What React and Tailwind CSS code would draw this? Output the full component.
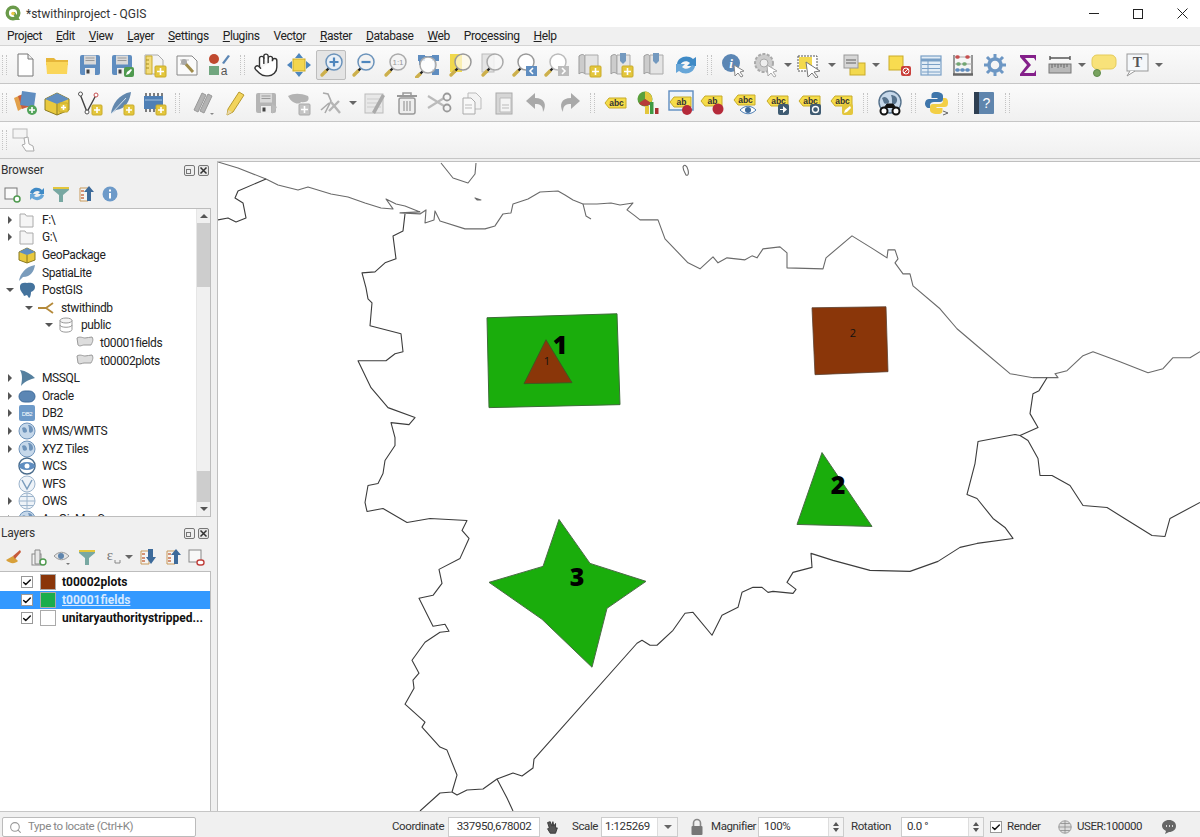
import { Hand, Check, Search } from "lucide-react";

const YB = ({ x = 15, y = 15, s = 10, c = "#e3c63c", e = "#c9ab2a" }) => (
  <g>
    <rect x={x} y={y} width={s} height={s} rx="1" fill={c} stroke={e} />
    <path d={`M${x + s / 2} ${y + 2}v${s - 4}M${x + 2} ${y + s / 2}h${s - 4}`} stroke="#fff" strokeWidth="1.6" />
  </g>
);

const Floppy = ({ c = "#5f8dc0" }) => (
  <g>
    <rect x="3" y="3" width="20" height="20" rx="2" fill={c} />
    <rect x="7" y="3.5" width="12" height="9" fill="#d9d9d9" />
    <path d="M8.5 6h9M8.5 8.5h9" stroke="#999" />
    <rect x="8" y="16" width="10" height="7" fill="#eee" />
    <rect x="9.5" y="17.5" width="3" height="4" fill="#444" />
  </g>
);

const Lens = ({ children, fill = "#fff", stroke = "#888", cx = 16, cy = 10 }) => (
  <g>
    <line x1={cx - 12} y1={cy + 13} x2={cx - 8} y2={cy + 9} stroke="#cdb04c" strokeWidth="3.4" strokeLinecap="round" />
    <line x1={cx - 7.5} y1={cy + 8.5} x2={cx - 5} y2={cy + 6} stroke="#222" strokeWidth="2.4" />
    <circle cx={cx} cy={cy} r="8" fill={fill} stroke={stroke} strokeWidth="1.5" />
    {children}
  </g>
);

const MapSheet = () => (
  <g>
    <path d="M3 4c3-2 4-2 6 0v18c-2-2-4-2-6 0z" fill="#ccc" stroke="#999" />
    <path d="M9 3h13v19H9z" fill="#e4e4e4" stroke="#aaa" />
  </g>
);

const Abc = ({ x = 0, y = 0, t = "abc" }) => (
  <g transform={`translate(${x} ${y})`}>
    <path d="M5 5h17v10H5l-4-5z" fill="#f5dc48" stroke="#c7ab2a" />
    <text x="12.5" y="13" fontSize="8.5" fontWeight="700" textAnchor="middle" fill="#333" fontFamily="Liberation Sans, sans-serif">{t}</text>
  </g>
);

const Globe = ({ c = "#6f94bb", x = 13, y = 13, r = 10 }) => (
  <g>
    <circle cx={x} cy={y} r={r} fill="#c6d8ea" stroke={c} strokeWidth="1.4" />
    <path d={`M${x - r + 3} ${y - 4}c4-3 6 1 7 3s-3 4-5 2M${x + 1} ${y - 7}c3 0 7 2 6 6s-5 5-5 1 0-4-1-7`} fill={c} />
  </g>
);

const ICONS = {
  new: <g><path d="M6 2h10l5 5v17H6z" fill="#fff" stroke="#777" /><path d="M16 2v5h5" fill="#eee" stroke="#777" /></g>,
  open: <g><path d="M2 6h8l2 2h12v5H2z" fill="#e6b63a" /><path d="M2 10h22l-1 12H3z" fill="#fad65a" /></g>,
  save: <Floppy />,
  saveAs: <g><Floppy /><rect x="15" y="15" width="10" height="10" rx="2" fill="#4f9a4f" /><path d="M17 23l1-3 4-3 1 1-3 4z" fill="#fff" /></g>,
  newLayout: <g><path d="M4 3h13l5 5v14H4z" fill="#f3f3f3" stroke="#aaa" /><path d="M5 4h6v18H5z" fill="#f3dc7c" stroke="#c9ab2a" /><path d="M5 8h3M5 12h3M5 16h3" stroke="#a98e20" /><YB x={14} y={14} s={11} /></g>,
  layoutMgr: <g><path d="M3 4h15l5 5v14H3z" fill="#fafafa" stroke="#888" /><path d="M6 8h9M6 12h6" stroke="#bbb" /><path d="M10 10l9 10" stroke="#a08c4a" strokeWidth="3" /><circle cx="10" cy="10" r="3" fill="#aaa" /></g>,
  style: <g><circle cx="8" cy="7" r="5" fill="#c0492f" /><rect x="3" y="14" width="10" height="9" fill="#71a67f" /><path d="M16 11l6-8 2 1-6 8z" fill="#5b86b4" /><text x="18" y="23" fontSize="12" fill="#555" textAnchor="middle" fontFamily="Liberation Sans, sans-serif">a</text></g>,
  panTo: <g><rect x="7" y="7" width="12" height="12" fill="#f4d64e" stroke="#c9ab2a" /><path d="M13 1l4 5H9zM13 25l-4-5h8zM1 13l5-4v8zM25 13l-5 4V9z" fill="#4e86bd" /></g>,
  zoomIn: <Lens fill="#e8eff6" stroke="#6b93bb"><path d="M16 5.5v9M11.5 10h9" stroke="#4e86bd" strokeWidth="2.2" /></Lens>,
  zoomOut: <Lens fill="#f2f2f2" stroke="#6b93bb"><path d="M11.5 10h9" stroke="#4e86bd" strokeWidth="2.2" /></Lens>,
  zoom11: <Lens fill="#f4f4f4" stroke="#aaa"><text x="16" y="13" fontSize="8" textAnchor="middle" fill="#999" fontFamily="Liberation Sans, sans-serif">1:1</text></Lens>,
  zoomFull: <g><path d="M3 3h7v6H3zM17 3h7v6h-7zM17 17h7v6h-7z" fill="#5f8dc0" /><path d="M10 5h7M20 9v8M5 9v4" stroke="#5f8dc0" strokeWidth="2" /><Lens fill="#ffffffcc" stroke="#aaa" cx={13} cy={13} /></g>,
  zoomLayer: <g><rect x="3" y="2" width="12" height="18" fill="#f0d84c" /><Lens fill="#fffbe6aa" stroke="#999" /></g>,
  zoomSel: <g><rect x="3" y="2" width="12" height="18" fill="#e4e4e4" stroke="#bbb" /><Lens fill="#f7f7f7cc" stroke="#aaa" /></g>,
  zoomLast: <g><Lens fill="#fff" stroke="#999" cx={14} /><rect x="14" y="14" width="11" height="10" fill="#5f8dc0" /><path d="M21 16l-3 3 3 3" stroke="#fff" strokeWidth="1.6" fill="none" /></g>,
  zoomNext: <g><Lens fill="#fff" stroke="#bbb" cx={14} /><rect x="14" y="14" width="11" height="10" fill="#bcbcbc" /><path d="M18 16l3 3-3 3" stroke="#fff" strokeWidth="1.6" fill="none" /></g>,
  bookmarkNew: <g><MapSheet /><YB x={14} y={14} s={11} /></g>,
  bookmarkNew2: <g><MapSheet /><path d="M12 1h6v8l-3 3-3-3z" fill="#7399bf" /><YB x={14} y={14} s={11} /></g>,
  bookmarks: <g><MapSheet /><path d="M12 1h6v8l-3 3-3-3z" fill="#7399bf" /></g>,
  refresh: <g><path d="M4 12c1-7 10-10 16-5l3-2v9h-9l3-3c-3-3-8-2-10 2z" fill="#3f8ac6" /><path d="M22 14c-1 7-10 10-16 5l-3 2v-9h9l-3 3c3 3 8 2 10-2z" fill="#67a6d8" /></g>,
  identify: <g><circle cx="11" cy="11" r="9" fill="#5b86b4" /><text x="11" y="16" fontSize="13" fontStyle="italic" fontWeight="700" fill="#fff" textAnchor="middle" fontFamily="Liberation Serif, serif">i</text><path d="M14 13l10 6-4 1 3 4-2 1-3-4-3 3z" fill="#fff" stroke="#888" /></g>,
  runFeature: <g><circle cx="11" cy="11" r="9" fill="#ccc" stroke="#aaa" strokeDasharray="3 1.5" strokeWidth="2" /><circle cx="11" cy="11" r="4" fill="#eee" stroke="#aaa" /><path d="M14 13l10 6-4 1 3 4-2 1-3-4-3 3z" fill="#fff" stroke="#aaa" /></g>,
  select: <g><rect x="1" y="4" width="19" height="15" fill="#fff" stroke="#555" strokeDasharray="2 1" /><rect x="2" y="5" width="13" height="12" fill="#f3d94e" /><path d="M9 10l14 9-6 1 4 5-2 1-4-5-4 4z" fill="#fff" stroke="#777" /></g>,
  selectVal: <g><rect x="9" y="11" width="15" height="12" fill="#f3d94e" stroke="#c9ab2a" /><rect x="3" y="3" width="14" height="13" fill="#d7d7d7" stroke="#999" /><path d="M5 8h10M5 11h10" stroke="#888" strokeWidth="1.5" /></g>,
  deselect: <g><rect x="3" y="4" width="14" height="14" fill="#f8dc50" stroke="#c9ab2a" /><rect x="15" y="14" width="10" height="10" rx="2" fill="#c9403c" /><circle cx="20" cy="19" r="3" fill="none" stroke="#fff" /><path d="M18 21l4-4" stroke="#fff" /></g>,
  attrTable: <g><rect x="3" y="4" width="20" height="19" fill="#e3edf6" stroke="#7aa0c6" strokeWidth="1.2" /><path d="M3 8h20" stroke="#7aa0c6" strokeWidth="3" /><path d="M4 12.5h18M4 16.5h18M4 20h18M10 9v14" stroke="#7aa0c6" /></g>,
  stats: <g><path d="M4 3v19M22 3v19" stroke="#777" strokeWidth="1.5" /><path d="M3 22.5h20" stroke="#666" strokeWidth="2.5" /><path d="M4 5h18M4 12h18M4 18h18" stroke="#aaa" /><path d="M7 5h1M17 5h1" stroke="#c65050" strokeWidth="3.5" strokeLinecap="round" /><path d="M8 12h1M14 12h1" stroke="#72a672" strokeWidth="3.5" strokeLinecap="round" /><path d="M7 18h1M12 18h1M17 18h1" stroke="#5f8dc0" strokeWidth="3.5" strokeLinecap="round" /></g>,
  gear: <g><circle cx="13" cy="13" r="6" fill="none" stroke="#6d97c4" strokeWidth="3.5" /><path d="M13 2v5M13 19v5M2 13h5M19 13h5M5 5l4 4M17 17l4 4M21 5l-4 4M9 17l-4 4" stroke="#6d97c4" strokeWidth="3" /></g>,
  sigma: <path d="M5 3h16v6l-2-3H10l6 7-7 8h10l2-3v6H5v-2l7-9-7-8z" fill="#84208a" />,
  ruler: <g><path d="M3 6h20M3 4v4M23 4v4" stroke="#555" strokeWidth="1.4" /><rect x="2" y="12" width="22" height="9" fill="#b8b8b8" stroke="#777" /><path d="M5 12v4M8 12v3M11 12v4M14 12v3M17 12v4M20 12v3" stroke="#666" /></g>,
  annotation: <g><rect x="1" y="3" width="24" height="14" rx="5" fill="#f8e27a" stroke="#e4cb5a" /><path d="M6 16l-1 6 7-5z" fill="#f8e27a" /><circle cx="6" cy="21" r="3.5" fill="#78a35f" stroke="#5f8a4c" /></g>,
  textAnno: <g><rect x="3" y="2" width="21" height="17" fill="#f4f7fa" stroke="#999" /><path d="M6 19l-3 5 8-5" fill="#fff" stroke="#999" /><text x="13.5" y="15" fontSize="14" fontWeight="700" fill="#555" textAnchor="middle" fontFamily="Liberation Serif, serif">T</text></g>,

  dsm: <g><path d="M2 8l9-4 3 12-8 5z" fill="#e2a04a" /><path d="M6 6l10-3 3 13-9 3z" fill="#c95c3c" /><rect x="9" y="2" width="14" height="14" transform="rotate(8 16 9)" fill="#5f8dc0" /><circle cx="20" cy="20" r="5" fill="#52a35a" /><path d="M20 17v6M17 20h6" stroke="#fff" strokeWidth="1.6" /></g>,
  gpkg: <g><path d="M1 9l12-6 12 6v11l-12 5-12-5z" fill="#e9c93e" stroke="#8a7a20" /><path d="M1 9l12 5 12-5-12-6z" fill="#5f8dc0" /><path d="M13 14v11" stroke="#8a7a20" /><YB x={15} y={13} s={9} /></g>,
  vertex: <g><path d="M3 4l7 18 9-17" fill="none" stroke="#444" strokeWidth="1.4" /><circle cx="3.5" cy="4" r="2" fill="#fff" stroke="#555" /><circle cx="19" cy="5" r="2" fill="#fff" stroke="#c65050" /><circle cx="10" cy="22" r="2" fill="#fff" stroke="#555" /><YB x={15} y={15} s={10} /></g>,
  feather: <g><path d="M2 24c1-10 8-20 20-22-1 8-5 17-15 18z" fill="#6388ae" /><path d="M2 24L17 8" stroke="#d8e4ee" /><YB x={15} y={15} s={10} /></g>,
  chip: <g><rect x="3" y="6" width="19" height="13" fill="#4e7fb5" /><path d="M5 3v3M9 3v3M13 3v3M17 3v3M21 3v3M5 19v3M9 19v3M13 19v3" stroke="#555" strokeWidth="1.5" /><path d="M4 10h17" stroke="#9fc0df" /><YB x={15} y={15} s={10} /></g>,
  pencils: <g><path d="M5 20L13 3l4 2-8 17zM11 21L19 4l4 2-8 17z" fill="#b3b3b3" stroke="#999" /><path d="M21 23h4l-2 2z" fill="#888" /></g>,
  pencil: <g><path d="M7 19L18 2l5 3-11 17-6 3z" fill="#f2d45c" stroke="#b79a2f" /><path d="M6 25l1-5 4 2z" fill="#e9d7a8" /></g>,
  saveEdit: <g><Floppy c="#b5b5b5" /><path d="M19 14l5 3-5 7z" fill="#bbb" /></g>,
  addFeature: <g><path d="M2 6c6-3 12-3 20 0 2 4-1 7-7 6-2 3-9 2-13-6z" fill="#b3b3b3" /><YB x={13} y={14} s={11} c="#c4c4c4" e="#aaa" /></g>,
  moveFeature: <g><path d="M5 3l5 1 3 7-6 12M3 20l8-7" fill="none" stroke="#aaa" strokeWidth="1.6" /><path d="M11 21l10-10M13 12l9 11" stroke="#b5b5b5" strokeWidth="2.4" /></g>,
  toggle: <g><rect x="3" y="4" width="18" height="19" fill="#e8e8e8" stroke="#bbb" /><path d="M5 9h14M5 13h14M5 17h14" stroke="#ccc" /><path d="M10 22l10-18 3 2-10 18z" fill="#aaa" /></g>,
  trash: <g><path d="M3 6h20" stroke="#999" strokeWidth="2" /><path d="M9 6V3h8v3" fill="none" stroke="#999" strokeWidth="1.5" /><rect x="5" y="8" width="16" height="16" rx="2" fill="#eee" stroke="#999" strokeWidth="1.5" /><path d="M10 11v10M13 11v10M16 11v10" stroke="#aaa" strokeWidth="1.5" /></g>,
  cut: <g><path d="M1 6l16 10M1 18l16-10" stroke="#bbb" strokeWidth="2.2" /><circle cx="20" cy="7" r="3.5" fill="none" stroke="#999" strokeWidth="1.8" /><circle cx="20" cy="18" r="3.5" fill="none" stroke="#999" strokeWidth="1.8" /></g>,
  copy: <g><path d="M9 3h8l5 5v11H9z" fill="#f3f3f3" stroke="#bbb" /><path d="M4 8h8l4 4v12H4z" fill="#f8f8f8" stroke="#aaa" /><path d="M6 15h7M6 18h7" stroke="#bbb" /></g>,
  paste: <g><rect x="5" y="3" width="16" height="21" fill="#d6d6d6" stroke="#aaa" /><path d="M9 8h11v14H9z" fill="#f4f4f4" stroke="#bbb" /><path d="M11 15h7M11 18h7" stroke="#bbb" /></g>,
  undo: <path d="M11 3L2 11l9 8v-5c5 0 8 1 8 8 4-7 2-14-8-14z" fill="#a9a9a9" />,
  redo: <path d="M15 3l9 8-9 8v-5c-5 0-8 1-8 8-4-7-2-14 8-14z" fill="#a9a9a9" />,
  abc: <Abc x={1} y={3} />,
  labelDiag: <g><circle cx="10" cy="9" r="7.5" fill="#5aa03c" /><path d="M10 9V1.5A7.5 7.5 0 0 1 16 13z" fill="#e3c63c" /><path d="M10 9l6 4A7.5 7.5 0 0 1 4 13z" fill="#b73a3a" /><rect x="10" y="16" width="4" height="8" fill="#e3c63c" /><rect x="15" y="12" width="3.5" height="12" fill="#3e9a44" /><rect x="20" y="18" width="3.5" height="6" fill="#a83232" /></g>,
  labelPin: <g><rect x="1" y="1" width="24" height="19" fill="#eef4fa" stroke="#5f8dc0" strokeWidth="1.4" /><Abc x={1} y={2} t="ab" /><circle cx="19" cy="20" r="5" fill="#b52a3a" /></g>,
  labelPin2: <g><Abc x={0} y={1} t="ab" /><circle cx="18" cy="19" r="5.5" fill="#b52a3a" /></g>,
  labelEye: <g><Abc x={1} y={0} /><path d="M8 20c5-5 11-5 16 0-5 5-11 5-16 0z" fill="#fff" stroke="#4e7fb5" /><circle cx="16" cy="20" r="3" fill="#3d6a9a" /></g>,
  labelMove: <g><Abc x={1} y={1} /><rect x="13" y="14" width="11" height="11" rx="2" fill="#3f5b72" /><path d="M15 19h3v-3l4 3.5-4 3.500v-3h-3z" fill="#fff" /></g>,
  labelRot: <g><Abc x={1} y={1} /><rect x="13" y="14" width="11" height="11" rx="2" fill="#3f5b72" /><circle cx="18.5" cy="19.5" r="3" fill="none" stroke="#fff" strokeWidth="1.4" /></g>,
  labelEdit: <g><Abc x={1} y={1} /><rect x="13" y="14" width="11" height="11" rx="2" fill="#e3c63c" /><path d="M15 23l1-3 5-4 1 2-4 4z" fill="#fff" /></g>,
  metaSearch: <g><Globe r={11} x={13} y={12} c="#56728c" /><circle cx="7" cy="21" r="3.5" fill="#fff" stroke="#111" strokeWidth="2" /><circle cx="19" cy="21" r="3.5" fill="#fff" stroke="#111" strokeWidth="2" /><path d="M7 18l3-4h6l3 4" fill="#111" stroke="#111" /></g>,
  python: <g><path d="M12.5 2c-5 0-5 2-5 4v2h6v1H5c-3 0-4 3-4 5s2 4 3 4h2v-3c0-2 2-3 4-3h6c2 0 3-1 3-3V6c0-2-2-4-7.5-4z" fill="#3f76ab" /><path d="M13.5 24c5 0 5-2 5-4v-2h-6v-1H21c3 0 3-3 3-5s-1-4-3-4h-2v3c0 2-2 3-4 3H9c-2 0-3 1-3 3v3c0 2 2 4 7.5 4z" fill="#f3cf45" /><path d="M19 21l5 2-5 2" fill="none" stroke="#666" /></g>,
  help: <g><rect x="3" y="2" width="20" height="22" rx="1" fill="#5f85ad" /><rect x="3" y="2" width="5" height="22" fill="#2e3f52" /><text x="15.5" y="18" fontSize="14" fill="#fff" textAnchor="middle" fontFamily="Liberation Sans, sans-serif">?</text></g>,
  selHand: <g><rect x="1" y="2" width="14" height="9" fill="#f4f4f4" stroke="#aaa" /><path d="M16 10l1 7 4 2 1 5h-8l-4-6 3-1-1-6z" fill="#fff" stroke="#999" /></g>,
};

// small panel + tree icons, 18 box
const SMALL = {
  pAdd: <g><rect x="2" y="3" width="12" height="11" fill="#fafafa" stroke="#777" /><circle cx="14" cy="14" r="3" fill="#fff" stroke="#4f9a4f" strokeWidth="1.5" /></g>,
  pRefresh: <g><path d="M2 8c1-5 8-7 12-3l2-2v6h-6l2-2c-2-2-6-1-7 2z" fill="#3f8ac6" /><path d="M16 10c-1 5-8 7-12 3l-2 2V9h6l-2 2c2 2 6 1 7-2z" fill="#67a6d8" /></g>,
  pFilter: <g><path d="M1 2h16v3l-6 5v7H7v-7L1 5z" fill="#78a8a2" /><path d="M1 2h16v2H1z" fill="#e3c63c" /></g>,
  pCollapse: <g><path d="M3 3h8v13H3z" fill="#f4f4f4" stroke="#c89a5a" /><path d="M4 6h3M4 10h3M4 13h3" stroke="#c9704a" strokeWidth="1.4" /><path d="M12 1l5 6h-3v9h-4V7H7z" fill="#3d6a9a" /></g>,
  pInfo: <g><circle cx="9" cy="9" r="7.5" fill="#6d9ac9" /><path d="M9 4.5v2M9 8v5.5" stroke="#fff" strokeWidth="2" /></g>,
  pBrush: <g><path d="M2 12l7-4 5 5c-3 3-8 3-12-1z" fill="#d8a03a" /><path d="M9 8l7-6 1 2-6 7z" fill="#c65a3a" /></g>,
  pGroup: <g><rect x="3" y="6" width="9" height="11" fill="#f4f4f4" stroke="#888" /><path d="M6 2h5v14H6z" fill="#e8e8e8" stroke="#888" /><circle cx="14" cy="14" r="3" fill="#fff" stroke="#4f9a4f" strokeWidth="1.4" /></g>,
  pEye: <g><path d="M1 8c5-5 10-5 15 0-5 5-10 5-15 0z" fill="#e4e4e4" stroke="#999" /><circle cx="8" cy="8" r="3" fill="#5f85ad" /><path d="M13 15h4l-2 2z" fill="#777" /></g>,
  pFilter2: <g><path d="M1 2h16v3l-6 5v7H7v-7L1 5z" fill="#78a8a2" /><path d="M1 2h16v2H1z" fill="#e3c63c" /></g>,
  pEps: <g><text x="6" y="12" fontSize="15" fill="#777" textAnchor="middle" fontFamily="Liberation Serif, serif">ε</text><path d="M11 15h5M11 12v3M16 12v3" stroke="#888" fill="none" /></g>,
  pExpand: <g><path d="M2 3h8v13H2z" fill="#f4f4f4" stroke="#c89a5a" /><path d="M3 6h3M3 10h3M3 13h3" stroke="#c9704a" strokeWidth="1.4" /><path d="M9 1h5v8h3l-5 7-5-7h2z" fill="#3d6a9a" /></g>,
  pRemove: <g><rect x="2" y="2" width="12" height="12" fill="#f8f8f8" stroke="#888" /><rect x="10" y="12" width="7" height="5" rx="2.5" fill="#fff" stroke="#c0403c" strokeWidth="1.4" /></g>,
  folder: <path d="M2 3h5l1.500 2H15v11H2z" fill="#f5f5f5" stroke="#aaa" />,
  gpkg: <g><path d="M1 6l8-4 8 4v8l-8 3-8-3z" fill="#e9c93e" stroke="#8a7a20" /><path d="M1 6l8 3 8-3-8-4z" fill="#5f8dc0" /><path d="M9 9v8" stroke="#8a7a20" /></g>,
  feather: <path d="M1 17C2 10 7 3 17 1c-1 6-4 12-12 12z" fill="#7a9cbc" />,
  postgis: <path d="M2 5c0-3 4-4 7-3 4-1 8 0 8 4 0 3-2 4-4 5 0 3-1 6-2 6l-2-3-3 1c-1-3-2-3-3-5-1-1-1-3-1-5z" fill="#44739d" />,
  conn: <path d="M1 9h8M9 9l7-5M9 9l7 5" stroke="#b58a3a" strokeWidth="1.8" fill="none" />,
  db: <g><ellipse cx="9" cy="4.5" rx="6" ry="2.5" fill="#f4f4f4" stroke="#999" /><path d="M3 4.500v9c0 3.500 12 3.500 12 0v-9M3 9c0 3 12 3 12 0" fill="none" stroke="#999" /></g>,
  poly: <path d="M1 4c3-2 6 0 8 0s5-1 7-1c2 3 0 6-1 8H8c-2 0-4 2-6 0z" fill="#ddd" stroke="#999" />,
  mssql: <path d="M2 1c6 1 11 4 15 8-4 1-10 3-14 8 1-5 2-11-1-16z" fill="#55809f" />,
  oracle: <rect x="1" y="4" width="16" height="11" rx="5.5" fill="#5b86b4" stroke="#3d6a9a" />,
  db2: <g><rect x="1" y="1" width="16" height="16" rx="2" fill="#6d9ac9" /><text x="9" y="12" fontSize="6" fill="#fff" textAnchor="middle" fontFamily="Liberation Sans, sans-serif">DB2</text></g>,
  globe: <g><circle cx="9" cy="9" r="8" fill="#c6d8ea" stroke="#6f94bb" /><path d="M4 6c3-2 5 1 5 3s-3 2-4 1M10 3c3 0 5 2 5 5s-4 4-4 1 0-4-1-6z" fill="#6f94bb" /></g>,
  wcs: <g><circle cx="9" cy="9" r="8" fill="#fff" stroke="#4a6c8c" strokeWidth="1.5" /><ellipse cx="9" cy="9" rx="8" ry="4" fill="#5f8dc0" /><circle cx="9" cy="9" r="2.5" fill="#fff" /></g>,
  wfs: <g><circle cx="9" cy="9" r="8" fill="#eef3f8" stroke="#9cb4cc" /><path d="M4 5l5 9 5-9" fill="none" stroke="#7a9cbc" strokeWidth="1.5" /></g>,
  ows: <g><circle cx="9" cy="9" r="8" fill="#eef3f8" stroke="#9cb4cc" /><path d="M1 9h16M9 1v16M3 4.500h12M3 13.500h12" stroke="#9cb4cc" /></g>,
};

const TOP_TOOLS = ["new", "open", "save", "saveAs", "newLayout", "layoutMgr", "style", "|", "hand", "panTo", "zoomIn", "zoomOut", "zoom11", "zoomFull", "zoomLayer", "zoomSel", "zoomLast", "zoomNext", "bookmarkNew", "bookmarkNew2", "bookmarks", "refresh", "|", "identify", "runFeature", "v", "select", "v", "selectVal", "v", "deselect", "attrTable", "stats", "gear", "sigma", "ruler", "v", "annotation", "textAnno", "v"];
const EDIT_TOOLS = ["dsm", "gpkg", "vertex", "feather", "chip", "|", "pencils", "pencil", "saveEdit", "addFeature", "moveFeature", "v", "toggle", "trash", "cut", "copy", "paste", "undo", "redo", "|", "abc", "labelDiag", "labelPin", "labelPin2", "labelEye", "labelMove", "labelRot", "labelEdit", "|", "metaSearch", "|", "python", "|", "help", "|"];

const MENU = [
  ["Pro", "j", "ect"], ["", "E", "dit"], ["", "V", "iew"], ["", "L", "ayer"], ["", "S", "ettings"], ["", "P", "lugins"],
  ["Vect", "o", "r"], ["", "R", "aster"], ["", "D", "atabase"], ["", "W", "eb"], ["Pro", "c", "essing"], ["", "H", "elp"],
];

const BROWSER_ROWS = [
  { label: "F:\\", icon: "folder", depth: 0, arrow: "r" },
  { label: "G:\\", icon: "folder", depth: 0, arrow: "r" },
  { label: "GeoPackage", icon: "gpkg", depth: 0 },
  { label: "SpatiaLite", icon: "feather", depth: 0 },
  { label: "PostGIS", icon: "postgis", depth: 0, arrow: "d" },
  { label: "stwithindb", icon: "conn", depth: 1, arrow: "d" },
  { label: "public", icon: "db", depth: 2, arrow: "d" },
  { label: "t00001fields", icon: "poly", depth: 3 },
  { label: "t00002plots", icon: "poly", depth: 3 },
  { label: "MSSQL", icon: "mssql", depth: 0, arrow: "r" },
  { label: "Oracle", icon: "oracle", depth: 0, arrow: "r" },
  { label: "DB2", icon: "db2", depth: 0, arrow: "r" },
  { label: "WMS/WMTS", icon: "globe", depth: 0, arrow: "r" },
  { label: "XYZ Tiles", icon: "globe", depth: 0, arrow: "r" },
  { label: "WCS", icon: "wcs", depth: 0 },
  { label: "WFS", icon: "wfs", depth: 0 },
  { label: "OWS", icon: "ows", depth: 0, arrow: "r" },
  { label: "ArcGisMapServer", icon: "globe", depth: 0, arrow: "r" },
];

const INDENT = ["pl-[2px]", "pl-[21px]", "pl-[41px]", "pl-[60px]"];

const COAST = "218,161 238,167 266,178 278,184 298,189 308,186 331,193 348,196 365,202 381,207 393,208 386,198 396,203 405,205 420,211 400,212 420,213 426,209 425,222 434,219 435,210 440,220 465,228 485,228 495,225 503,213 511,212 513,203 528,198 540,191 558,190 565,194 573,199 583,203 597,203 611,202 620,204 633,202 627,209 635,215 640,219 658,219 665,238 688,262 700,268 713,256 718,262 727,257 745,259 752,255 757,257 763,248 780,246 787,252 787,267 823,268 826,257 852,235 873,248 887,257 888,249 895,249 898,258 895,262 903,273 910,273 913,285 940,308 957,328 977,345 1010,373 1033,377 1047,377 1058,377 1055,373 1067,370 1083,355 1093,351 1120,361 1148,372 1163,368 1173,357 1190,357 1200,351";
const LEFT_INLET = "266,178 238,190 235,197 243,202 246,217 236,221 228,217 218,219";
const TOP_INLET = "441,162 453,177 468,182 475,173 476,162";
const STUB = "583,203 586,215 591,218";
const BORDER_W = "405,213 403,230 393,235 396,258 385,262 375,271 362,272 366,287 368,298 372,302 370,325 401,333 403,351 395,353 386,360 358,360 371,387 388,407 415,417 409,424 391,422 395,437 395,445 385,460 383,473 378,483 368,485 365,502 367,511 383,508 407,522 430,518 467,520 462,530 469,538 460,558 439,569 442,583 433,595 419,598 433,626 445,624 449,631 440,632 425,642 412,660 419,673 413,680 414,688 405,704 425,722 422,727 440,747 447,750 457,775 452,792 440,793 420,811";
const BORDER_S = "452,792 457,795 467,790 483,789 497,779 513,773 522,776 533,768 534,759 637,643 642,640 650,645 657,645 673,630 685,613 693,612 712,635 722,615 738,607 742,592 753,587 762,587 768,592 773,591 793,593 796,589 787,582 793,572 812,567 811,553 833,560 870,570 910,571 938,561 960,547 977,543 1013,538 1005,527 993,518 977,498 967,494 975,463 978,441 1015,434 1020,435 1038,427 1030,413 1033,393 1039,390 1047,377";
const BORDER_R = "1020,435 1028,440 1038,458 1040,475 1052,475 1070,485 1083,505 1107,507 1123,517 1152,535 1165,536 1170,518 1200,502";
const BRANCH = "497,779 507,798 513,811";

function Grip() {
  return <span className="mx-auto block h-[20px] w-[5px] border-x border-dotted border-[#c4c4c4]" />;
}

function Tool({ name }) {
  if (name === "|") return <span className="flex w-[15px] shrink-0 items-center"><Grip /></span>;
  if (name === "v") {
    return (
      <span className="flex w-[12px] shrink-0 items-center justify-center">
        <span className="h-0 w-0 border-x-[4px] border-t-[4px] border-x-transparent border-t-[#666]" />
      </span>
    );
  }
  const active = name === "zoomIn";
  return (
    <span className="flex w-[32.3px] shrink-0 items-center justify-center">
      <span className={`flex h-[30px] w-[30px] items-center justify-center rounded-[2px] border ${active ? "border-[#bdbdbd] bg-[#e4e4e4]" : "border-transparent"}`}>
        {name === "hand" ? (
          <Hand size={26} strokeWidth={1.3} fill="#fff" color="#333" />
        ) : (
          <svg width="26" height="26" viewBox="0 0 26 26">{ICONS[name]}</svg>
        )}
      </span>
    </span>
  );
}

function Toolbar({ tools, className }) {
  return (
    <div className={`flex items-stretch border-b border-[#c6c6c6] bg-gradient-to-b from-[#fbfbfb] to-[#f0f0f0] ${className}`}>
      <span className="flex w-[9px] shrink-0 items-center pl-[2px]"><span className="block h-[20px] w-[5px] border-x border-dotted border-[#c4c4c4]" /></span>
      {tools.map((t, i) => <Tool key={i} name={t} />)}
    </div>
  );
}

function Small({ name, size = 18 }) {
  return <svg width={size} height={size} viewBox="0 0 18 18" className="shrink-0">{SMALL[name]}</svg>;
}

function DockHeader({ title }) {
  return (
    <div className="flex h-[18px] items-center justify-between pl-[1px] pr-[2px] text-[12px] tracking-[-0.2px] text-[#333]">
      <span>{title}</span>
      <span className="flex gap-[3px]">
        <span className="relative h-[11px] w-[11px] rounded-[2px] border border-[#777] bg-[#eee]">
          <span className="absolute left-[1px] top-[3px] h-[5px] w-[5px] border border-[#777]" />
        </span>
        <span className="flex h-[11px] w-[11px] items-center justify-center rounded-[2px] border border-[#777] bg-[#e6e6e6]">
          <svg width="9" height="9" viewBox="0 0 9 9"><path d="M1.5 1.5l6 6M7.5 1.5l-6 6" stroke="#333" strokeWidth="1.5" /></svg>
        </span>
      </span>
    </div>
  );
}

function TreeRow({ row }) {
  return (
    <div className={`flex h-[17.6px] shrink-0 items-center text-[12px] tracking-[-0.4px] text-[#222] ${INDENT[row.depth]}`}>
      <span className="flex w-[15px] shrink-0 items-center justify-center">
        {row.arrow === "r" && <span className="h-0 w-0 border-y-[4px] border-l-[4px] border-y-transparent border-l-[#555]" />}
        {row.arrow === "d" && <span className="h-0 w-0 border-x-[4px] border-t-[4px] border-x-transparent border-t-[#555]" />}
      </span>
      <span className="ml-[1px] flex w-[18px] shrink-0 justify-center"><Small name={row.icon} /></span>
      <span className="ml-[6px] whitespace-nowrap">{row.label}</span>
    </div>
  );
}

function Scrollbar() {
  return (
    <div className="flex w-[14px] shrink-0 flex-col border-l border-[#e6e6e6] bg-[#f0f0f0]">
      <span className="flex h-[14px] items-center justify-center"><span className="h-0 w-0 border-x-[4px] border-b-[4px] border-x-transparent border-b-[#555]" /></span>
      <span className="h-[64px] bg-[#cdcdcd]" />
      <span className="flex-1" />
      <span className="h-[31px] bg-[#cdcdcd]" />
      <span className="flex h-[14px] items-center justify-center"><span className="h-0 w-0 border-x-[4px] border-t-[4px] border-x-transparent border-t-[#555]" /></span>
    </div>
  );
}

function LayerRow({ label, swatch, selected }) {
  return (
    <div className={`flex h-[18px] items-center pl-[21px] text-[12px] font-bold ${selected ? "bg-[#3399ff] text-[#d5e9ff]" : "text-[#111]"}`}>
      <CheckBox />
      <span className={`ml-[7px] h-[16px] w-[16px] shrink-0 border border-[#aaa] ${swatch}`} />
      <span className={`ml-[6px] whitespace-nowrap ${selected ? "underline" : ""}`}>{label}</span>
    </div>
  );
}

function CheckBox() {
  return (
    <span className="flex h-[12px] w-[12px] shrink-0 items-center justify-center border border-[#999] bg-white">
      <Check size={11} strokeWidth={3.5} color="#111" />
    </span>
  );
}

function Spin() {
  return (
    <span className="flex h-full w-[15px] flex-col items-center justify-center gap-[2px] border-l border-[#ddd] bg-[#f4f4f4]">
      <span className="h-0 w-0 border-x-[3px] border-b-[4px] border-x-transparent border-b-[#555]" />
      <span className="h-0 w-0 border-x-[3px] border-t-[4px] border-x-transparent border-t-[#555]" />
    </span>
  );
}

function MapCanvas() {
  return (
    <svg viewBox="218 161 982 650" className="block h-full w-full bg-white" preserveAspectRatio="none">
      <g fill="none" stroke="#6a6a6a" strokeWidth="1.1" strokeLinejoin="round">
        <polyline points={COAST} />
        <polyline points={TOP_INLET} />
        <polyline points={STUB} />
        <path d="M683 166c1-3 4-2 5 3 1 4 0 6-2 5-1-2-3-5-3-8zM475 197l6 2-4 0z" />
      </g>
      <g fill="none" stroke="#3c3c3c" strokeWidth="1.1" strokeLinejoin="round">
        <polyline points={LEFT_INLET} />
        <polyline points={BORDER_W} />
        <polyline points={BORDER_S} />
        <polyline points={BORDER_R} />
        <polyline points={BRANCH} />
      </g>
      <polygon points="487,317 617,313 620,404 489,407" fill="#1aad0c" stroke="#3d6b38" />
      <polygon points="546,339 572,382 524,383" fill="#8a3609" stroke="#3d5a20" />
      <polygon points="812,307 886,306 888,371 815,374" fill="#8a3609" stroke="#5a4030" strokeWidth="0.8" />
      <polygon points="822,452 872,526 797,524" fill="#1aad0c" stroke="#4a6a45" />
      <polygon points="559,519 590,563 646,581 607,608 592,667 542,619 489,582 543,566" fill="#1aad0c" stroke="#4a6a45" />
      <g fontFamily="Open Sans, sans-serif" fontWeight="800" fontSize="25" fill="#000" textAnchor="middle">
        <text x="560" y="353">1</text>
        <text x="838" y="494">2</text>
        <text x="577" y="586">3</text>
      </g>
      <g fontFamily="Open Sans, sans-serif" fontSize="11" fill="#111" textAnchor="middle">
        <text x="547" y="364">1</text>
        <text x="853" y="336">2</text>
      </g>
    </svg>
  );
}

export default function App() {
  return (
    <div className="flex h-[837px] w-[1200px] flex-col overflow-hidden bg-[#f0f0f0] font-['Roboto',sans-serif] text-[#222]">
      {/* window title */}
      <div className="flex h-[27px] shrink-0 items-center bg-white pl-[5px]">
        <svg width="17" height="17" viewBox="0 0 17 17" className="shrink-0">
          <circle cx="8" cy="8" r="5.8" fill="none" stroke="#6a9a4a" strokeWidth="3.4" />
          <path d="M7 7l3 0 5 8-4 0z" fill="#6a9a4a" />
          <circle cx="8" cy="8.5" r="1.8" fill="#e8c84a" />
        </svg>
        <span className="ml-[4px] text-[12px] text-[#333]">*stwithinproject - QGIS</span>
        <div className="ml-auto flex items-center gap-[34px] pr-[12px]">
          <span className="h-px w-[10px] bg-[#222]" />
          <span className="h-[10px] w-[10px] border border-[#222]" />
          <svg width="11" height="11" viewBox="0 0 11 11"><path d="M.5.5l10 10M10.5.5l-10 10" stroke="#222" /></svg>
        </div>
      </div>

      {/* menu */}
      <div className="flex h-[19px] shrink-0 items-center gap-[14px] border-b border-[#d4d4d4] bg-[#f0f0f0] pl-[7px] text-[12px] tracking-[-0.4px] text-[#222]">
        {MENU.map(([a, u, b]) => (
          <span key={a + u + b}>{a}<span className="underline">{u}</span>{b}</span>
        ))}
      </div>

      <Toolbar tools={TOP_TOOLS} className="h-[38px] shrink-0" />
      <Toolbar tools={EDIT_TOOLS} className="h-[38px] shrink-0" />
      <div className="flex h-[37px] shrink-0 items-center border-b border-[#c6c6c6] bg-gradient-to-b from-[#fbfbfb] to-[#f0f0f0]">
        <span className="flex w-[9px] shrink-0 items-center pl-[2px]"><span className="block h-[20px] w-[5px] border-x border-dotted border-[#c4c4c4]" /></span>
        <span className="flex w-[32.3px] justify-center opacity-80">
          <svg width="26" height="26" viewBox="0 0 26 26">{ICONS.selHand}</svg>
        </span>
      </div>

      {/* main */}
      <div className="flex min-h-0 flex-1 pt-[2px]">
        <div className="flex w-[211px] shrink-0 flex-col">
          <DockHeader title="Browser" />
          <div className="flex h-[29px] shrink-0 items-center gap-[6.6px] pl-[3px]">
            {["pAdd", "pRefresh", "pFilter", "pCollapse", "pInfo"].map((n) => <Small key={n} name={n} />)}
          </div>
          <div className="flex h-[309px] shrink-0 border border-l-0 border-[#bdbdbd] bg-white">
            <div className="flex min-w-0 flex-1 flex-col overflow-hidden pt-[2px]">
              {BROWSER_ROWS.map((r) => <TreeRow key={r.label} row={r} />)}
            </div>
            <Scrollbar />
          </div>
          <div className="mt-[7px]">
            <DockHeader title="Layers" />
          </div>
          <div className="flex h-[29px] shrink-0 items-center pl-[4px]">
            <Small name="pBrush" />
            <span className="ml-[7px]"><Small name="pGroup" /></span>
            <span className="ml-[6px]"><Small name="pEye" /></span>
            <span className="ml-[7px]"><Small name="pFilter2" /></span>
            <span className="ml-[8px]"><Small name="pEps" /></span>
            <span className="ml-[3px] h-0 w-0 border-x-[4px] border-t-[4px] border-x-transparent border-t-[#666]" />
            <span className="ml-[6px]"><Small name="pExpand" /></span>
            <span className="ml-[7px]"><Small name="pCollapse" /></span>
            <span className="ml-[5px]"><Small name="pRemove" /></span>
          </div>
          <div className="min-h-0 flex-1 border border-b-0 border-l-0 border-[#bdbdbd] bg-white pt-[1px]">
            <LayerRow label="t00002plots" swatch="bg-[#8a3609]" />
            <LayerRow label="t00001fields" swatch="bg-[#1aad4c]" selected />
            <LayerRow label="unitaryauthoritystripped..." swatch="bg-white" />
          </div>
        </div>
        <div className="ml-[6px] min-w-0 flex-1 border-l border-t border-[#bfbfbf]">
          <MapCanvas />
        </div>
      </div>

      {/* status bar */}
      <div className="flex h-[26px] shrink-0 items-center border-t border-[#c6c6c6] pt-[5px] text-[11.5px] tracking-[-0.4px] text-[#333]">
        <div className="ml-[2px] flex h-[20px] w-[194px] items-center rounded-[2px] border border-[#bbb] bg-white pl-[6px] text-[#888]">
          <Search size={13} color="#999" />
          <span className="ml-[6px]">Type to locate (Ctrl+K)</span>
        </div>
        <span className="ml-[196px] w-[56px]">Coordinate</span>
        <span className="flex h-[20px] w-[92px] items-center justify-center border border-[#ccc] bg-white">337950,678002</span>
        <svg width="16" height="16" viewBox="0 0 18 18" className="ml-[4px]">
          <path d="M4 4l2 6-2 1 3 5h6l2-6-2 0V5l-2 3-1-5-1 5-2-5z" fill="#555" stroke="#333" />
        </svg>
        <span className="ml-[12px] w-[29px]">Scale</span>
        <div className="flex h-[20px] w-[77px] items-center border border-[#ccc] bg-white">
          <span className="flex-1 pl-[3px]">1:125269</span>
          <span className="flex h-full w-[20px] items-center justify-center border-l border-[#ddd] bg-[#f4f4f4]">
            <span className="h-0 w-0 border-x-[4px] border-t-[4px] border-x-transparent border-t-[#666]" />
          </span>
        </div>
        <svg width="14" height="18" viewBox="0 0 14 18" className="ml-[12px]">
          <path d="M3.5 8V5a3.5 3.5 0 0 1 7 0v3" fill="none" stroke="#888" strokeWidth="1.6" />
          <rect x="1.5" y="8" width="11" height="9" rx="1" fill="#777" />
        </svg>
        <span className="ml-[7px] w-[47px]">Magnifier</span>
        <div className="flex h-[20px] w-[86px] items-center border border-[#ccc] bg-white">
          <span className="flex-1 pl-[5px]">100%</span>
          <Spin />
        </div>
        <span className="ml-[7px] w-[50px]">Rotation</span>
        <div className="flex h-[20px] w-[83px] items-center border border-[#ccc] bg-white">
          <span className="flex-1 pl-[5px]">0.0 °</span>
          <Spin />
        </div>
        <span className="ml-[6px]"><CheckBox /></span>
        <span className="ml-[5px] w-[42px]">Render</span>
        <svg width="14" height="14" viewBox="0 0 18 18" className="ml-[9px]">
          <circle cx="9" cy="9" r="8" fill="#ddd" stroke="#888" />
          <path d="M1 9h16M9 1v16M3 4.5h12M3 13.5h12" stroke="#888" />
        </svg>
        <span className="ml-[5px] w-[80px]">USER:100000</span>
        <svg width="16" height="16" viewBox="0 0 16 16" className="ml-[4px]">
          <path d="M8 1c4 0 7 2.5 7 6s-3 6-7 6l-4 2 1-3c-2-1-4-3-4-5 0-3.5 3-6 7-6z" fill="#666" />
          <path d="M5 7h1M8 7h1M11 7h1" stroke="#fff" strokeWidth="1.5" />
        </svg>
      </div>
    </div>
  );
}
